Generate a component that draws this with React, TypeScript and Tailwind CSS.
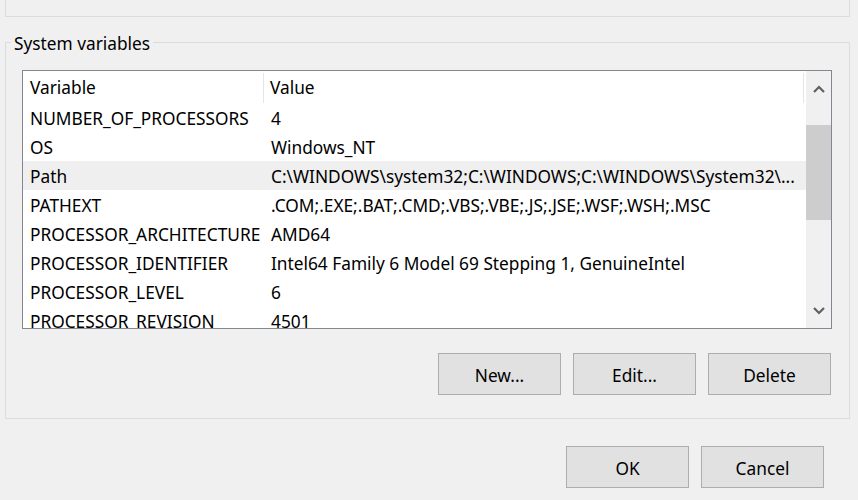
import React from "react";

const rows: [string, string][] = [
  ["NUMBER_OF_PROCESSORS", "4"],
  ["OS", "Windows_NT"],
  ["Path", "C:\\WINDOWS\\system32;C:\\WINDOWS;C:\\WINDOWS\\System32\\..."],
  ["PATHEXT", ".COM;.EXE;.BAT;.CMD;.VBS;.VBE;.JS;.JSE;.WSF;.WSH;.MSC"],
  ["PROCESSOR_ARCHITECTURE", "AMD64"],
  ["PROCESSOR_IDENTIFIER", "Intel64 Family 6 Model 69 Stepping 1, GenuineIntel"],
  ["PROCESSOR_LEVEL", "6"],
  ["PROCESSOR_REVISION", "4501"],
];

function Btn({ label }: { label: string }) {
  return (
    <button className="w-[123px] h-[42px] bg-[#e1e1e1] border border-[#adadad] text-black text-[17.3px] leading-none flex items-center justify-center pt-[3px]">
      {label}
    </button>
  );
}

export default function App() {
  return (
    <div
      className="w-[858px] h-[500px] bg-[#f0f0f0] text-black overflow-hidden flex flex-col"
      style={{ fontFamily: '"Noto Sans", "Open Sans", sans-serif' }}
    >
      <div className="ml-[5px] w-[845px] h-[17px] border-x border-b border-[#dcdcdc] shrink-0" />
      <div className="relative ml-[5px] mt-[25px] w-[845px] h-[377px] border border-[#dcdcdc] shrink-0 flex flex-col">
        <div className="absolute left-[5px] top-[-11px] px-[3px] bg-[#f0f0f0] text-[17.3px] leading-[24px]">
          System variables
        </div>
        <div className="mt-[27px] ml-[16px] w-[810px] h-[259px] border border-[#828790] bg-white flex overflow-hidden">
          <div className="flex-1 flex flex-col overflow-hidden text-[17.3px]">
            <div className="h-[32px] shrink-0 flex pt-[2px]">
              <div className="w-[241px] pl-[7px] flex items-center border-r border-[#e5e5e5]">Variable</div>
              <div className="flex-1 pl-[6px] flex items-center border-r border-[#e5e5e5] mr-[2px]">Value</div>
            </div>
            {rows.map(([k, v]) => (
              <div
                key={k}
                className={
                  "h-[29px] shrink-0 flex items-center whitespace-nowrap pt-[2px] " +
                  (k === "Path" ? "bg-[#efefef]" : "")
                }
              >
                <div className="w-[241px] pl-[7px] overflow-hidden">{k}</div>
                <div className="flex-1 pl-[7px] overflow-hidden">{v}</div>
              </div>
            ))}
          </div>
          <div className="w-[25px] bg-[#f0f0f0] flex flex-col shrink-0">
            <div className="h-[33px] flex items-center justify-center pt-[2px]">
              <svg width="12" height="8" viewBox="0 0 12 8">
                <path d="M1 7 L6 2 L11 7" stroke="#606060" strokeWidth="2.2" fill="none" />
              </svg>
            </div>
            <div className="h-[21px]" />
            <div className="h-[95px] bg-[#cdcdcd]" />
            <div className="flex-1" />
            <div className="h-[33px] flex items-center justify-center pb-[2px]">
              <svg width="12" height="8" viewBox="0 0 12 8">
                <path d="M1 1 L6 6 L11 1" stroke="#606060" strokeWidth="2.2" fill="none" />
              </svg>
            </div>
          </div>
        </div>
        <div className="mt-[24px] mr-[18px] flex justify-end gap-[12px]">
          <Btn label="New..." />
          <Btn label="Edit..." />
          <Btn label="Delete" />
        </div>
      </div>
      <div className="mt-[27px] mr-[34px] flex justify-end gap-[12px]">
        <Btn label="OK" />
        <Btn label="Cancel" />
      </div>
    </div>
  );
}
